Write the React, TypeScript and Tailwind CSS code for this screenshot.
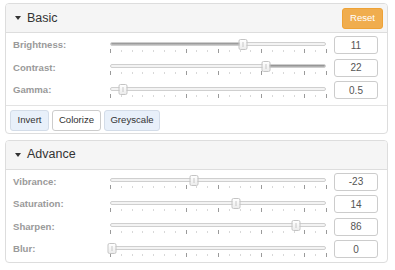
import React from 'react';

type Row = { label: string; value: string; pos: number; fill?: 'left' | 'right' };

const BASIC: Row[] = [
  { label: 'Brightness:', value: '11', pos: 0.616, fill: 'left' },
  { label: 'Contrast:', value: '22', pos: 0.722, fill: 'right' },
  { label: 'Gamma:', value: '0.5', pos: 0.06 },
];

const ADVANCE: Row[] = [
  { label: 'Vibrance:', value: '-23', pos: 0.389 },
  { label: 'Saturation:', value: '14', pos: 0.583 },
  { label: 'Sharpen:', value: '86', pos: 0.861 },
  { label: 'Blur:', value: '0', pos: 0.01 },
];

const LONG_TICKS = [0, 7, 10, 14, 18, 20];

const Ticks = () => (
  <svg width="217" height="5" className="block">
    {Array.from({ length: 21 }).map((_, i) => {
      const x = Math.round(i * 10.8) + 0.5;
      const long = LONG_TICKS.includes(i);
      return long ? (
        <line key={i} x1={x} x2={x} y1={0} y2={4} stroke="#9a9a9a" strokeWidth="1" />
      ) : (
        <line key={i} x1={x} x2={x} y1={1.5} y2={2.5} stroke="#b0b0b0" strokeWidth="1" />
      );
    })}
  </svg>
);

const Slider = ({ pos, fill }: { pos: number; fill?: 'left' | 'right' }) => {
  const pct = pos * 100;
  return (
    <div className="relative w-[216px] h-[12px] mt-[5px] shrink-0">
      <div className="absolute left-0 right-0 top-0 h-[4px] rounded-full border border-[#cfcfcf] bg-[#f3f3f3] overflow-hidden">
        {fill === 'left' && (
          <div className="absolute left-0 top-0 bottom-0 bg-gradient-to-b from-[#8f8f8f] to-[#c4c4c4]" style={{ width: `${pct}%` }} />
        )}
        {fill === 'right' && (
          <div className="absolute right-0 top-0 bottom-0 bg-gradient-to-b from-[#8a8a8a] to-[#bdbdbd]" style={{ width: `${100 - pct}%` }} />
        )}
      </div>
      <div className="absolute top-[7px] left-0">
        <Ticks />
      </div>
      <div
        className="absolute top-[-3px] w-[9px] h-[11px] -translate-x-1/2 rounded-[2px] border border-[#c4c4c4] bg-gradient-to-b from-white to-[#ececec] flex items-center justify-center"
        style={{ left: `${pct}%` }}
      >
        <div className="w-px h-[5px] bg-[#c8c8c8]" />
      </div>
    </div>
  );
};

const SliderRow = ({ row }: { row: Row }) => (
  <div className="flex items-center h-[22.5px] pl-[7px] pr-[9px]">
    <div className="w-[97px] shrink-0 text-[9.6px] text-[#9a9a9a] font-semibold leading-none">{row.label}</div>
    <Slider pos={row.pos} fill={row.fill} />
    <div className="w-[8px] shrink-0" />
    <div className="w-[44px] h-[18px] shrink-0 rounded-[3px] border border-[#cccccc] bg-white flex items-center justify-center text-[10px] text-[#555]">
      {row.value}
    </div>
  </div>
);

const Header = ({ title, children }: { title: string; children?: React.ReactNode }) => (
  <div className="h-[29px] flex items-center pl-[9px] pr-[4px] bg-[#f5f5f5] border-b border-[#dddddd] rounded-t-[3px]">
    <svg width="6" height="4" viewBox="0 0 6 4" className="mr-[6px]">
      <polygon points="0,0 6,0 3,4" fill="#333" />
    </svg>
    <span className="text-[12.5px] text-[#333] leading-none">{title}</span>
    <div className="flex-1" />
    {children}
  </div>
);

export default function App() {
  return (
    <div className="w-[395px] h-[270px] bg-white pt-[3px] pl-[5px]" style={{ fontFamily: '"Liberation Sans", Arial, sans-serif' }}>
      <div className="w-[383px] border border-[#dddddd] rounded-[4px] bg-white">
        <Header title="Basic">
          <button className="w-[41px] h-[21px] rounded-[3px] bg-[#f0ad4e] border border-[#eea236] text-white text-[9.6px] leading-none">
            Reset
          </button>
        </Header>
        <div className="pt-[1px] pb-[3px]">
          {BASIC.map((r) => (
            <SliderRow key={r.label} row={r} />
          ))}
        </div>
        <div className="border-t border-[#e3e3e3] pt-[4px] pb-[2px] pl-[4px] flex gap-[3px]">
          <button className="w-[39px] h-[21px] rounded-[3px] bg-[#e8f0fa] border border-[#d3dce8] text-[9.6px] text-[#333] leading-none">
            Invert
          </button>
          <button className="w-[49px] h-[21px] rounded-[3px] bg-white border border-[#cccccc] text-[9.6px] text-[#333] leading-none">
            Colorize
          </button>
          <button className="w-[56px] h-[21px] rounded-[3px] bg-[#e8f0fa] border border-[#d3dce8] text-[9.6px] text-[#333] leading-none">
            Greyscale
          </button>
        </div>
      </div>
      <div className="w-[383px] mt-[6px] border border-[#dddddd] rounded-[4px] bg-white">
        <Header title="Advance" />
        <div className="pt-[1px] pb-[1px]">
          {ADVANCE.map((r) => (
            <SliderRow key={r.label} row={r} />
          ))}
        </div>
      </div>
    </div>
  );
}
